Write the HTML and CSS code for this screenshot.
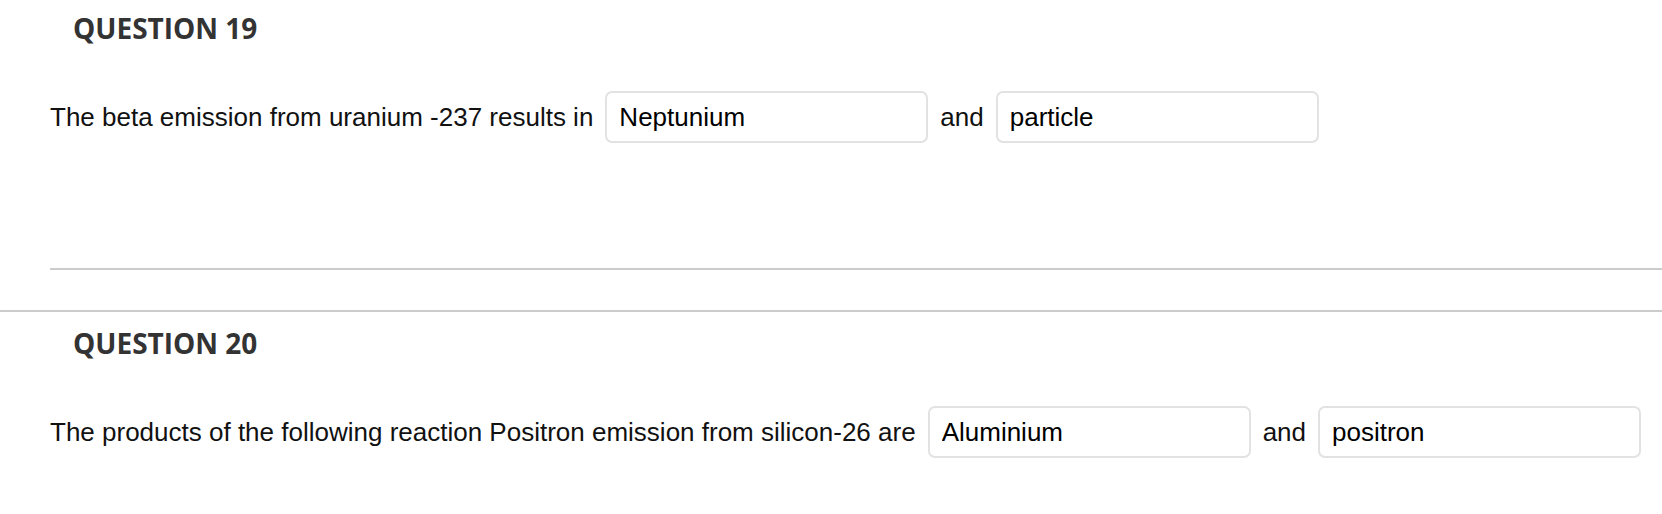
FILE: index.html
```html
<!DOCTYPE html>
<html lang="en">
<head>
    <meta charset="UTF-8">
    <meta name="viewport" content="width=device-width, initial-scale=1.0">
    <title>Questions</title>
    <link rel="stylesheet" href="styles.css">
</head>
<body>

<div class="question">
    <div class="question-head">
        <h3>QUESTION 19</h3>
    </div>
    <div class="question-body">
        <span>The beta emission from uranium -237 results in</span>
        <input type="text" class="answer" value="Neptunium">
        <span>and</span>
        <input type="text" class="answer" value="particle">
    </div>
    <hr class="divider">
</div>

<div class="question">
    <div class="question-head">
        <h3>QUESTION 20</h3>
    </div>
    <div class="question-body">
        <span>The products of the following reaction Positron emission from silicon-26 are</span>
        <input type="text" class="answer" value="Aluminium">
        <span>and</span>
        <input type="text" class="answer" value="positron">
    </div>
</div>

</body>
</html>
```

FILE: styles.css
```css
/* Basic page */
body {
    margin: 0;
    background-color: #ffffff;
    font-family: "Liberation Sans", Arial, sans-serif;
    color: #111;
    overflow: hidden;
}

/* Question blocks */
.question + .question {
    margin-top: 40px;
    border-top: 2px solid #cccccc;
}

.question-head {
    padding: 9px 0 0 73px;
}

.question + .question .question-head {
    padding-top: 12px;
}

.question-head h3 {
    margin: 0;
    font-family: "Open Sans", sans-serif;
    font-size: 28px;
    font-weight: bold;
    line-height: 38px;
    color: #333;
}

.question-body {
    display: flex;
    align-items: baseline;
    gap: 12px;
    padding: 44px 0 0 50px;
    font-size: 26px;
    white-space: nowrap;
}

/* Answer fields */
.answer {
    box-sizing: border-box;
    width: 323px;
    height: 52px;
    padding: 0 12px;
    margin: 0;
    border: 2px solid #e2e2e2;
    border-radius: 7px;
    background-color: #fff;
    font-family: "Liberation Sans", Arial, sans-serif;
    font-size: 26px;
    color: #000;
    outline: none;
}

.divider {
    height: 2px;
    margin: 125px 0 0 50px;
    border: 0;
    background-color: #cccccc;
}
```
